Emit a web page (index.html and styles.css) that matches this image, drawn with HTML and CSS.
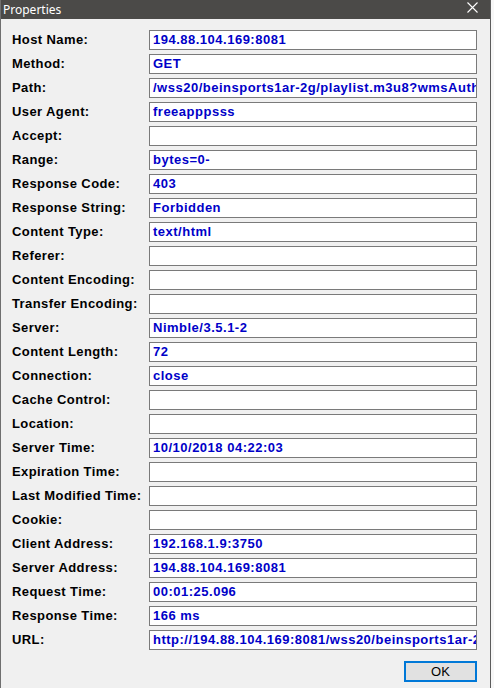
FILE: index.html
```
<!DOCTYPE html>
<html lang="en">
  <head>
    <meta charset="UTF-8" />
    <title>Properties</title>
    <link rel="stylesheet" href="styles.css">
  </head>
  <body>
    <div class="window">
      <div class="title-bar">
        <span class="title">Properties</span>
        <svg class="close" width="11" height="11" viewBox="0 0 11 11">
          <path d="M0.5 0.5 L10.5 10.5 M10.5 0.5 L0.5 10.5" stroke="#fff" stroke-width="1.1" fill="none" />
        </svg>
      </div>

      <div class="content">
        <div class="fields">
          <label>Host Name:</label><div class="value">194.88.104.169:8081</div>
          <label>Method:</label><div class="value">GET</div>
          <label>Path:</label><div class="value">/wss20/beinsports1ar-2g/playlist.m3u8?wmsAuth</div>
          <label>User Agent:</label><div class="value">freeapppsss</div>
          <label>Accept:</label><div class="value"></div>
          <label>Range:</label><div class="value">bytes=0-</div>
          <label>Response Code:</label><div class="value">403</div>
          <label>Response String:</label><div class="value">Forbidden</div>
          <label>Content Type:</label><div class="value">text/html</div>
          <label>Referer:</label><div class="value"></div>
          <label>Content Encoding:</label><div class="value"></div>
          <label>Transfer Encoding:</label><div class="value"></div>
          <label>Server:</label><div class="value">Nimble/3.5.1-2</div>
          <label>Content Length:</label><div class="value">72</div>
          <label>Connection:</label><div class="value">close</div>
          <label>Cache Control:</label><div class="value"></div>
          <label>Location:</label><div class="value"></div>
          <label>Server Time:</label><div class="value">10/10/2018 04:22:03</div>
          <label>Expiration Time:</label><div class="value"></div>
          <label>Last Modified Time:</label><div class="value"></div>
          <label>Cookie:</label><div class="value"></div>
          <label>Client Address:</label><div class="value">192.168.1.9:3750</div>
          <label>Server Address:</label><div class="value">194.88.104.169:8081</div>
          <label>Request Time:</label><div class="value">00:01:25.096</div>
          <label>Response Time:</label><div class="value">166 ms</div>
          <label>URL:</label><div class="value">http://194.88.104.169:8081/wss20/beinsports1ar-2</div>
        </div>

        <div class="buttons">
          <button class="ok-btn">OK</button>
        </div>
      </div>
    </div>
    <div class="side-strip"></div>
  </body>
</html>
```

FILE: styles.css
```
body {
  margin: 0;
  width: 494px;
  height: 688px;
  overflow: hidden;
  display: flex;
  background-color: #e9e9e9;
  font-family: "Liberation Sans", Arial, sans-serif;
}

.window {
  width: 489px;
  height: 688px;
  background-color: #f0f0f0;
  border-left: 1px solid #6f6f6f;
  border-right: 1px solid #5c5c5c;
  display: flex;
  flex-direction: column;
}

.title-bar {
  height: 19px;
  background-color: #4b4a48;
  display: flex;
  align-items: center;
  justify-content: space-between;
  padding: 0 12px 0 2px;
}

.title {
  font-family: "Noto Sans", sans-serif;
  font-size: 12px;
  color: #ffffff;
  line-height: 19px;
}

.close {
  margin-top: -4px;
}

.content {
  padding: 11px 0 0 11px;
}

.fields {
  display: grid;
  grid-template-columns: 137px 328px;
  grid-auto-rows: 20px;
  row-gap: 4px;
}

label {
  font-size: 13px;
  font-weight: bold;
  color: #000;
  line-height: 20px;
  letter-spacing: 0.4px;
}

.value {
  box-sizing: border-box;
  height: 20px;
  background-color: #fff;
  border: 1px solid #7a7a7a;
  padding: 0 0 0 3px;
  font-size: 13px;
  font-weight: bold;
  color: #0000c8;
  line-height: 18px;
  white-space: nowrap;
  overflow: hidden;
  letter-spacing: 0.5px;
}

.buttons {
  display: flex;
  justify-content: flex-end;
  width: 465px;
  margin-top: 11px;
}

.ok-btn {
  width: 73px;
  height: 21px;
  background-color: #e1e1e1;
  border: 2px solid #0078d7;
  font-family: "Liberation Sans", Arial, sans-serif;
  font-size: 13px;
  color: #000;
  padding: 0;
}

.side-strip {
  flex: 1;
  background-color: #f7f7f7;
}
```
